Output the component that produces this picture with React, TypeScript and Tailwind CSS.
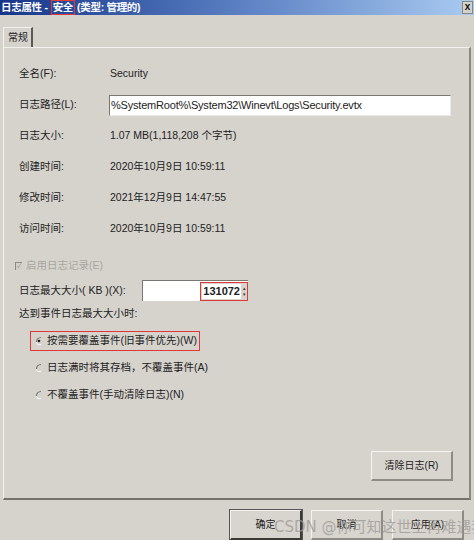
const FONT = "font-['Liberation_Sans','Noto_Sans_CJK_SC',sans-serif]";

const INFO = [
  { label: '全名(F):', value: 'Security' },
  { label: '日志路径(L):', value: '%SystemRoot%\\System32\\Winevt\\Logs\\Security.evtx', input: true },
  { label: '日志大小:', value: '1.07 MB(1,118,208 个字节)' },
  { label: '创建时间:', value: '2020年10月9日 10:59:11' },
  { label: '修改时间:', value: '2021年12月9日 14:47:55' },
  { label: '访问时间:', value: '2020年10月9日 10:59:11' },
];

const RADIOS = [
  { label: '按需要覆盖事件(旧事件优先)(W)', checked: true },
  { label: '日志满时将其存档，不覆盖事件(A)', checked: false },
  { label: '不覆盖事件(手动清除日志)(N)', checked: false },
];

function Radio({ checked }: { checked: boolean }) {
  return (
    <svg width="8" height="10" viewBox="0 0 8 10" className="shrink-0">
      <path d="M6 1.5C3 1.5 1.5 3.5 1.5 6" stroke="#7a7670" strokeWidth="1.2" fill="none" />
      <path d="M1.5 6.5C2 8.5 4 9 6 8.5" stroke="#ffffff" strokeWidth="1" fill="none" />
      {checked && <circle cx="4" cy="5" r="1.3" fill="#222" />}
    </svg>
  );
}

function WinButton({ label, isDefault, wide }: { label: string; isDefault?: boolean; wide?: boolean }) {
  return (
    <div
      className={`${wide ? 'w-[82px]' : 'w-[72px]'} h-[30px] flex items-center justify-center text-[10px] text-[#222] bg-[#d8d5cf] border-t border-l border-t-[#f4f3f0] border-l-[#f4f3f0] border-r-2 border-b-2 ${
        isDefault ? 'border-r-[#3c3a36] border-b-[#3c3a36] outline outline-1 outline-[#555]' : 'border-r-[#8e8b85] border-b-[#8e8b85]'
      }`}
    >
      {label}
    </div>
  );
}

export default function App() {
  return (
    <div className={`relative w-[474px] h-[540px] overflow-hidden bg-[#d6d3cd] flex flex-col ${FONT}`}>
      {/* title bar */}
      <div className="h-[15px] flex items-center justify-between bg-gradient-to-r from-[#16358a] via-[#5b7fc2] to-[#aacbf1]">
        <div className="flex items-center pl-[1px] text-[10.5px] leading-none font-bold text-white tracking-[-0.3px]">
          <span>日志属性 -</span>
          <span className="ml-[3px] mr-[2px] px-[1px] py-[1px] border border-[#e33b3b]">安全</span>
          <span>(类型: 管理的)</span>
        </div>
        <div className="w-[11px] h-[13px] mr-[1px] bg-[#d4d1cb] border border-[#8a8780] flex items-center justify-center text-[10px] font-bold leading-none text-[#111]">
          x
        </div>
      </div>

      {/* tab strip */}
      <div className="mt-[12px] pl-[3px] h-[20px] flex items-end">
        <div className="w-[30px] h-[20px] flex items-center pl-[4px] text-[10px] text-[#222] border-t border-l border-t-[#f2f1ee] border-l-[#f2f1ee] border-r-2 border-r-[#5a5853]">
          常规
        </div>
      </div>

      {/* tab panel */}
      <div className="mx-[3px] h-[458px] border-t border-l border-t-[#f2f1ee] border-l-[#f2f1ee] border-r-2 border-b-2 border-r-[#8c8983] border-b-[#75726c] flex flex-col pt-[11px] text-[10.5px] text-[#222]">
        {INFO.map((row) => (
          <div key={row.label} className="h-[31px] flex items-center pl-[15px]">
            <span className="w-[90px] shrink-0">{row.label}</span>
            {row.input ? (
              <div className="w-[342px] h-[21px] flex items-center pl-[1px] bg-white border-t border-l border-t-[#7a7771] border-l-[#7a7771] border-b border-r border-b-[#ebeae6] border-r-[#ebeae6] text-[11px] tracking-[-0.2px]">
                {row.value}
              </div>
            ) : (
              <span className="pl-[1px]">{row.value}</span>
            )}
          </div>
        ))}

        <div className="mt-[11px] h-[20px] flex items-center pl-[11px] gap-[4px] text-[#a9a6a0]">
          <div className="w-[7px] h-[8px] bg-[#d3d0ca] border-l border-t border-[#8d8a84] flex items-center justify-center text-[6px] text-[#8d8a84]">
            ✓
          </div>
          <span>启用日志记录(E)</span>
        </div>

        <div className="mt-[4px] h-[22px] flex items-center pl-[15px]">
          <span className="w-[123px] shrink-0">日志最大大小( KB )(X):</span>
          <div className="w-[106px] h-[21px] flex items-center justify-end bg-white border-t border-l border-t-[#7a7771] border-l-[#7a7771]">
            <div className="h-[19px] flex items-center gap-[1px] pl-[1px] border border-[#e0373b] bg-[#d7d4ce]">
              <span className="bg-white text-[11px] font-bold leading-[15px] px-[1px]">131072</span>
              <div className="flex flex-col items-center justify-center w-[5px] text-[5px] leading-[6px] text-[#333]">
                <span>▴</span>
                <span>▾</span>
              </div>
            </div>
          </div>
        </div>

        <div className="mt-[2px] h-[20px] flex items-center pl-[15px]">达到事件日志最大大小时:</div>

        <div className="mt-[7px] flex flex-col gap-[7px] pl-[26px]">
          {RADIOS.map((r) => (
            <div key={r.label} className="h-[20px] flex items-center">
              <div
                className={`h-[20px] flex items-center gap-[4px] pl-[4px] pr-[2px] ${
                  r.checked ? 'border border-[#e0373b]' : 'border border-transparent'
                }`}
              >
                <Radio checked={r.checked} />
                <span>{r.label}</span>
              </div>
            </div>
          ))}
        </div>

        <div className="flex-1 flex items-end justify-end pr-[16px] pb-[17px]">
          <WinButton label="清除日志(R)" wide />
        </div>
      </div>

      {/* dialog buttons */}
      <div className="mt-[10px] flex justify-end gap-[9px] pr-[10px]">
        <WinButton label="确定" isDefault />
        <WinButton label="取消" />
        <WinButton label="应用(A)" />
      </div>

      {/* watermark */}
      <div className="absolute left-[274px] top-[516px] text-[15px] text-[#9a9793]/75 font-['DejaVu_Sans','Noto_Sans_CJK_SC',sans-serif] whitespace-nowrap pointer-events-none">
        CSDN @你可知这世上再难遇我
      </div>
    </div>
  );
}
